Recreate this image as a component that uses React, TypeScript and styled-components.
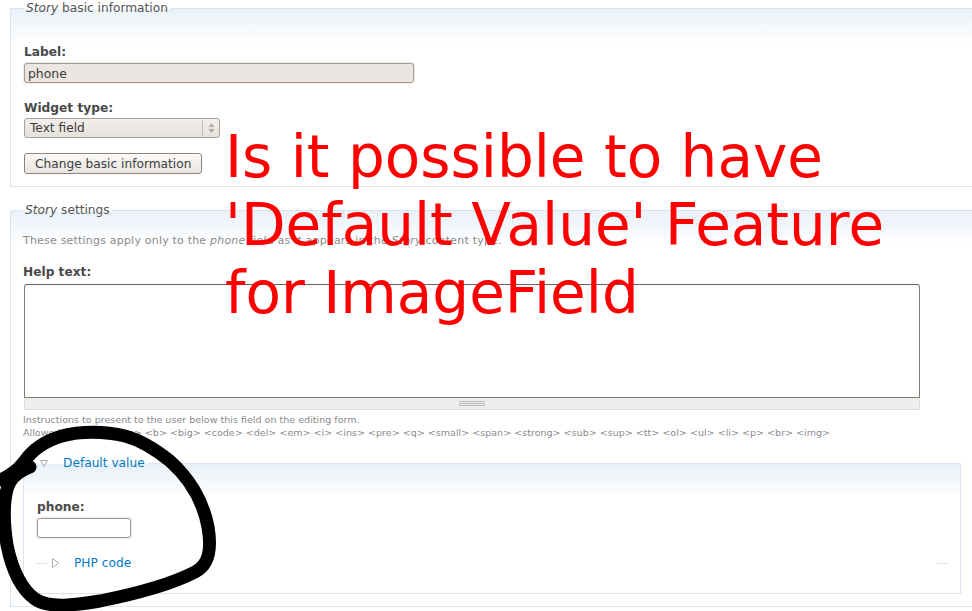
import React from 'react'
import styled, { createGlobalStyle } from 'styled-components'

const GlobalStyle = createGlobalStyle`
  html, body {
    margin: 0;
    padding: 0;
    background: #fff;
    overflow: hidden;
  }
  body {
    font-family: 'DejaVu Sans', Verdana, sans-serif;
    font-size: 12.2px;
    color: #494949;
  }
`

const Page = styled.div`
  position: relative;
  width: 972px;
  height: 611px;
  overflow: hidden;
`

const Panel = styled.fieldset<{ $gap?: number; $pad?: number }>`
  box-sizing: border-box;
  width: 964px;
  margin: ${(p) => p.$gap ?? 0}px 0 0 10px;
  padding: 0 12px 12px ${(p) => p.$pad ?? 13}px;
  border: 1px solid #d8e5f0;
  background: linear-gradient(#e9f1f9, #ffffff 34px);
  min-inline-size: 0;
`

const SubPanel = styled.fieldset`
  box-sizing: border-box;
  width: 938px;
  margin: 16px 0 0 0;
  padding: 0 12px 12px 13px;
  border: 1px solid #d8e5f0;
  background: linear-gradient(#e9f1f9, #ffffff 34px);
  min-inline-size: 0;
`

const Legend = styled.legend`
  padding: 0 2px;
  line-height: 16px;
  color: #555;
  em {
    font-style: italic;
  }
`

const LinkLegend = styled.legend`
  display: flex;
  align-items: center;
  padding: 0 3px;
  line-height: 16px;
`

const Link = styled.a`
  color: #027ac6;
  text-decoration: none;
  margin-left: 15px;
`

const Item = styled.div<{ $top: number }>`
  margin-top: ${(p) => p.$top}px;
`

const Label = styled.label`
  display: block;
  font-weight: bold;
  line-height: 16px;
`

const TextInput = styled.input<{ $w: number; $tint?: boolean }>`
  display: block;
  box-sizing: border-box;
  width: ${(p) => p.$w}px;
  height: 20px;
  margin: 3px 0 0 0;
  padding: 0 3px;
  border: 1px solid #a59b90;
  border-radius: 3px;
  background: ${(p) => (p.$tint ? '#ebe6e1' : '#fff')};
  box-shadow: 0 0 0 1px #eeebe8;
  font-family: 'DejaVu Sans', Verdana, sans-serif;
  font-size: 12.4px;
  color: #3c3c3c;
  outline: none;
`

const Select = styled.div`
  display: flex;
  align-items: center;
  box-sizing: border-box;
  width: 196px;
  height: 20px;
  margin-top: 2px;
  padding-left: 5px;
  border: 1px solid #a8a096;
  border-radius: 3px;
  background: linear-gradient(#f2efec, #e6e1dc);
  font-size: 12.2px;
  color: #3c3c3c;
`

const SelectText = styled.span`
  flex: 1;
`

const SelectArrows = styled.span`
  display: flex;
  align-items: center;
  height: 16px;
  padding: 0 4px 0 5px;
  border-left: 1px solid #c2bbb3;
`

const Button = styled.button`
  display: block;
  box-sizing: border-box;
  height: 21px;
  margin-top: 15px;
  padding: 0 10px;
  border: 1px solid #8e847a;
  border-radius: 3px;
  background: linear-gradient(#fbfaf9, #e9e5e1);
  font-family: 'DejaVu Sans', Verdana, sans-serif;
  font-size: 12.2px;
  color: #3c3c3c;
`

const Intro = styled.div`
  margin-top: 16px;
  font-size: 11px;
  letter-spacing: 0.2px;
  line-height: 13px;
  color: #8a8a8a;
`

const Description = styled.div`
  margin-top: 3px;
  font-size: 9.55px;
  line-height: 13px;
  color: #8a8a8a;
`

const TextArea = styled.textarea`
  display: block;
  box-sizing: border-box;
  width: 896px;
  height: 114px;
  margin: 4px 0 0 1px;
  border: 1px solid #857a6f;
  border-top-color: #6e6358;
  border-radius: 3px 3px 0 0;
  background: #fff;
  resize: none;
  outline: none;
`

const Grippie = styled.div`
  display: flex;
  flex-direction: column;
  align-items: center;
  justify-content: center;
  gap: 1px;
  box-sizing: border-box;
  width: 896px;
  height: 12px;
  margin-left: 1px;
  border: 1px solid #ddd;
  border-top: none;
  background: #eee;
`

const GripLine = styled.span`
  width: 26px;
  height: 1px;
  background: #bbb;
`

const CollapsedRow = styled.div`
  display: flex;
  align-items: center;
  height: 16px;
  margin: 17px 0 10px -1px;
`

const Rule = styled.span<{ $grow?: boolean }>`
  width: 12px;
  height: 1px;
  background: #d3e3f1;
  ${(p) => (p.$grow ? 'margin-left: auto;' : '')}
`

const Arrow = styled.svg`
  flex: none;
  margin-left: 4px;
`

const Caption = styled.div`
  position: absolute;
  left: 225px;
  top: 123px;
  font-family: 'DejaVu Sans', sans-serif;
  font-size: 58px;
  line-height: 68px;
  color: #f00;
  white-space: nowrap;
`

const Scribble = styled.svg`
  position: absolute;
  left: 0;
  top: 0;
  pointer-events: none;
`

const tags =
  '<a> <b> <big> <code> <del> <em> <i> <ins> <pre> <q> <small> <span> <strong> <sub> <sup> <tt> <ol> <ul> <li> <p> <br> <img>'

const App = () => {
  return (
    <Page>
      <GlobalStyle />

      <Panel>
        <Legend>
          <em>Story</em> basic information
        </Legend>
        <Item $top={28}>
          <Label>Label:</Label>
          <TextInput $w={390} $tint readOnly value="phone" />
        </Item>
        <Item $top={17}>
          <Label>Widget type:</Label>
          <Select>
            <SelectText>Text field</SelectText>
            <SelectArrows>
              <svg width="7" height="12" viewBox="0 0 7 12">
                <path d="M3.5 1 L6.5 5 L0.5 5 Z" fill="#b3aaa0" />
                <path d="M3.5 11 L6.5 7 L0.5 7 Z" fill="#b3aaa0" />
              </svg>
            </SelectArrows>
          </Select>
        </Item>
        <Button>Change basic information</Button>
      </Panel>

      <Panel $gap={15} $pad={12}>
        <Legend>
          <em>Story</em> settings
        </Legend>
        <Intro>
          These settings apply only to the <em>phone</em> field as it appears in the <em>Story</em> content type.
        </Intro>
        <Item $top={17}>
          <Label>Help text:</Label>
          <TextArea readOnly />
          <Grippie>
            <GripLine />
            <GripLine />
            <GripLine />
          </Grippie>
        </Item>
        <Description>
          Instructions to present to the user below this field on the editing form.
          <br />
          Allowed HTML tags: {tags}
        </Description>

        <SubPanel>
          <LinkLegend>
            <svg width="8" height="7" viewBox="0 0 8 7">
              <path d="M0.5 0.5 H7.5 L4 6.5 Z" fill="none" stroke="#aaa" strokeWidth="1" />
            </svg>
            <Link href="#">Default value</Link>
          </LinkLegend>
          <Item $top={28}>
            <Label>phone:</Label>
            <TextInput $w={94} readOnly value="" />
          </Item>
          <CollapsedRow>
            <Rule />
            <Arrow width="7" height="10" viewBox="0 0 7 10">
              <path d="M0.5 0.5 L6.5 5 L0.5 9.5 Z" fill="none" stroke="#aaa" strokeWidth="1" />
            </Arrow>
            <Link href="#">PHP code</Link>
            <Rule $grow />
          </CollapsedRow>
        </SubPanel>
      </Panel>

      <Caption>
        Is it possible to have
        <br />
        'Default Value' Feature
        <br />
        for ImageField
      </Caption>

      <Scribble width="972" height="611" viewBox="0 0 972 611">
        <path
          d="M0 480 C10 476 18 470 24 462 C32 450 45 441 62 436 C80 431 105 431 125 436 C140 440 155 449 170 461 C188 477 203 500 208 527 C212 550 209 565 195 572 C170 585 130 595 100 601 C75 605 50 609 35 599 C22 590 12 570 7 545 C3 520 3 495 10 482 C15 474 22 470 30 467"
          fill="none"
          stroke="#000"
          strokeWidth="13"
          strokeLinecap="round"
          strokeLinejoin="round"
        />
      </Scribble>
    </Page>
  )
}

export default App
